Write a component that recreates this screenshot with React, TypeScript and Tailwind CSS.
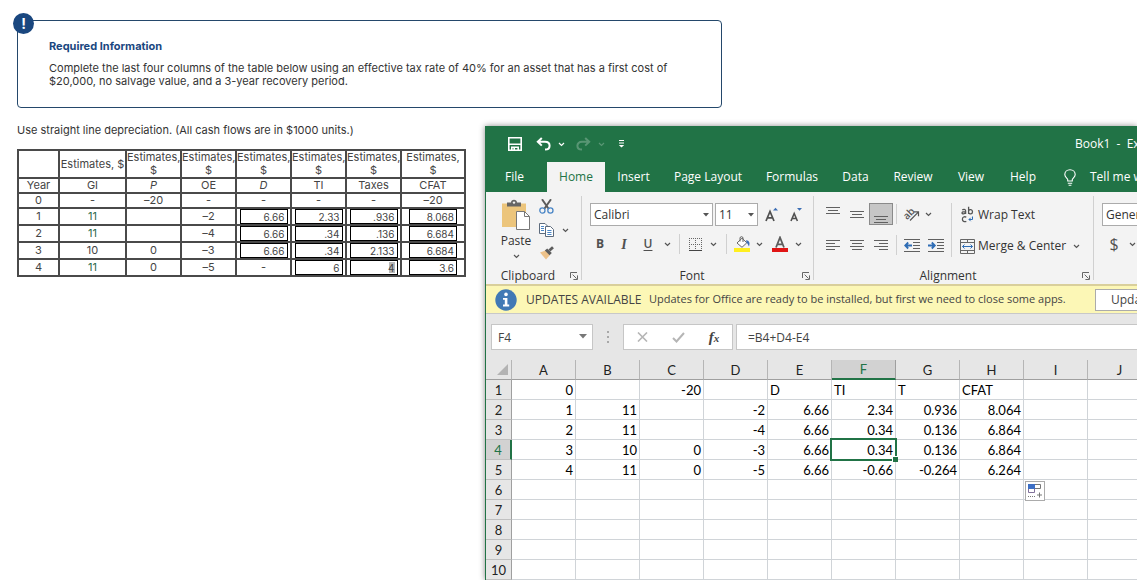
import React from "react";

const columns = ["A", "B", "C", "D", "E", "F", "G", "H", "I", "J"];

const sheet: string[][] = [
  ["0", "", "-20", "", "D", "TI", "T", "CFAT", "", ""],
  ["1", "11", "", "-2", "6.66", "2.34", "0.936", "8.064", "", ""],
  ["2", "11", "", "-4", "6.66", "0.34", "0.136", "6.864", "", ""],
  ["3", "10", "0", "-3", "6.66", "0.34", "0.136", "6.864", "", ""],
  ["4", "11", "0", "-5", "6.66", "-0.66", "-0.264", "6.264", "", ""],
  ["", "", "", "", "", "", "", "", "", ""],
  ["", "", "", "", "", "", "", "", "", ""],
  ["", "", "", "", "", "", "", "", "", ""],
  ["", "", "", "", "", "", "", "", "", ""],
  ["", "", "", "", "", "", "", "", "", ""],
];

type EstimateRow = { given: string[]; answers: string[] };

const estimates: EstimateRow[] = [
  { given: ["1", "11", "", "–2"], answers: ["6.66", "2.33", ".936", "8.068"] },
  { given: ["2", "11", "", "–4"], answers: ["6.66", ".34", ".136", "6.684"] },
  { given: ["3", "10", "0", "–3"], answers: ["6.66", ".34", "2.133", "6.684"] },
  { given: ["4", "11", "0", "–5", "-"], answers: ["6", "4", "3.6"] },
];

function Chevron({ className = "" }: { className?: string }) {
  return (
    <svg className={`shrink-0 ${className}`} width="7" height="5" viewBox="0 0 7 5" fill="none" stroke="currentColor" strokeWidth="1.2">
      <path d="M1 1l2.5 2.4L6 1" />
    </svg>
  );
}

function ChevronButton({ label, className = "text-[#555]" }: { label: string; className?: string }) {
  return (
    <button type="button" aria-label={label} className={`flex h-5 items-center justify-center ${className}`}>
      <Chevron />
    </button>
  );
}

function Divider({ className = "" }: { className?: string }) {
  return <div className={`w-px shrink-0 bg-[#d0d0d0] ${className}`} />;
}

function IconButton({ label, className = "w-6", children }: { label: string; className?: string; children: React.ReactNode }) {
  return (
    <button type="button" aria-label={label} className={`flex h-[22px] shrink-0 items-center justify-center text-[#505050] ${className}`}>
      {children}
    </button>
  );
}

function Lines({ rows, y = 0 }: { rows: [number, number][]; y?: number }) {
  return (
    <svg width="16" height="20" viewBox="0 0 16 20" stroke="#606060" strokeWidth="1">
      {rows.map(([x1, x2], i) => (
        <path key={i} d={`M${x1} ${y + i * 3 + 0.5}H${x2}`} />
      ))}
    </svg>
  );
}

function Launcher() {
  return (
    <svg width="8" height="8" viewBox="0 0 8 8" fill="none" stroke="#666" strokeWidth="1">
      <path d="M.5 6V.5H7M2.6 2.6L6.6 6.6M7.5 3.4V7.5H3.4" />
    </svg>
  );
}

function GroupLabel({ children }: { children: React.ReactNode }) {
  return (
    <div className="mt-auto mb-[2px] flex h-3 items-center pr-[3px] text-[12px] leading-3 text-[#333]">
      <span className="flex-1 text-center">{children}</span>
      <button type="button" aria-label={`${children} settings`}>
        <Launcher />
      </button>
    </div>
  );
}

function DropDown({ label, options, className }: { label: string; options: string[]; className: string }) {
  return (
    <div className={`relative shrink-0 ${className}`}>
      <select aria-label={label} className="block h-[23px] w-full appearance-none border border-[#ababab] bg-white pl-[3px] text-[12px] text-[#333] outline-none">
        {options.map((o) => (
          <option key={o}>{o}</option>
        ))}
      </select>
      <svg className="pointer-events-none absolute top-[10px] right-1" width="6" height="4" viewBox="0 0 6 4">
        <path d="M0 0h6L3 3.4z" fill="#555" />
      </svg>
    </div>
  );
}

function TitleBar() {
  return (
    <div className="flex h-9 items-center bg-[#217346] pl-[22px] text-white">
      <button type="button" aria-label="Save">
        <svg width="14" height="14" viewBox="0 0 14 14" fill="none" stroke="white" strokeWidth="1.6">
          <path d="M.8 .8H13.2V13.2H.8zM1 7.2H13" />
          <path d="M3.8 13.2V10.2H10.2V13.2M6.2 11V13.2" />
        </svg>
      </button>
      <button type="button" aria-label="Undo" className="ml-[14px]">
        <svg width="15" height="14" viewBox="0 0 15 14" fill="none" stroke="white" strokeWidth="2">
          <path d="M5.8 1L1.8 4.8L5.8 8.6M2 4.8H9C12 4.8 13.6 6.5 13.6 8.7C13.6 11.2 11.8 12.6 9 12.6" />
        </svg>
      </button>
      <ChevronButton label="Undo history" className="ml-[2px] w-4 text-white" />
      <button type="button" aria-label="Redo" className="ml-[7px] opacity-25">
        <svg width="15" height="14" viewBox="0 0 15 14" fill="none" stroke="white" strokeWidth="2">
          <path d="M9.2 1L13.2 4.8L9.2 8.6M13 4.8H6C3 4.8 1.4 6.5 1.4 8.7C1.4 11.2 3.2 12.6 6 12.6" />
        </svg>
      </button>
      <ChevronButton label="Redo history" className="ml-[2px] w-4 text-white opacity-25" />
      <button type="button" aria-label="Customize toolbar" className="ml-[9px]">
        <svg width="7" height="8" viewBox="0 0 7 8" fill="white">
          <path d="M1 0h5v1H1zM1 2.5h5v1H1zM.8 5h5.4L3.5 7.6z" />
        </svg>
      </button>
      <div className="ml-auto w-[62px] whitespace-pre text-[12px]">Book1  -  Excel</div>
    </div>
  );
}

function Tabs() {
  return (
    <nav className="flex h-[30px] items-stretch bg-[#217346] text-[12px] whitespace-nowrap text-white">
      <button type="button" className="w-[61px] shrink-0 pr-1">File</button>
      <button type="button" className="w-[58px] shrink-0 bg-[#f3f3f3] text-[#217346]">Home</button>
      <button type="button" className="w-[57px] shrink-0">Insert</button>
      <button type="button" className="w-[92px] shrink-0">Page Layout</button>
      <button type="button" className="w-[76px] shrink-0">Formulas</button>
      <button type="button" className="w-[51px] shrink-0">Data</button>
      <button type="button" className="w-[64px] shrink-0">Review</button>
      <button type="button" className="w-[52px] shrink-0">View</button>
      <button type="button" className="w-[52px] shrink-0">Help</button>
      <button type="button" className="ml-[15px] flex shrink-0 items-center gap-[14px]">
        <svg width="12" height="17" viewBox="0 0 12 17" fill="none" stroke="white" strokeWidth="1.1">
          <path d="M3.7 12V10.6C3.7 9.3 .8 8.4 .8 5.5C.8 2.8 3 .7 6 .7S11.2 2.8 11.2 5.5C11.2 8.4 8.3 9.3 8.3 10.6V12zM3.8 14.2H8.2M4.6 16.2H7.4" />
        </svg>
        Tell me what you want to do
      </button>
    </nav>
  );
}

function ClipboardGroup() {
  return (
    <div className="flex h-[92px] w-[95px] shrink-0 flex-col">
      <div className="flex pt-[7px] pl-4">
        <button type="button" className="flex w-[28px] flex-col items-center text-[12px] leading-4 text-[#333]">
          <svg width="28" height="31" viewBox="0 0 28 31">
            <path d="M0 4.5H24V28H0z" fill="#ecc57c" />
            <path d="M5 7.5V3.5H9C9 1.8 10.3.8 12 .8S15 1.8 15 3.5H19V7.5z" fill="#666" />
            <circle cx="12" cy="3.6" r="1.2" fill="#f3f3f3" />
            <path d="M14.5 12.5H22.5L27.5 17.5V30.5H14.5z" fill="white" stroke="#777" />
            <path d="M22.5 12.5V17.5H27.5" fill="none" stroke="#777" />
          </svg>
          <span className="mt-[3px]">Paste</span>
          <Chevron className="mt-[5px] text-[#555]" />
        </button>
        <div className="ml-[9px] flex flex-col gap-[9px]">
          <button type="button" aria-label="Cut">
            <svg width="15" height="15" viewBox="0 0 15 15" fill="none">
              <path d="M3 .3L9.8 10M12 .3L5.2 10" stroke="#5c5c5c" strokeWidth="2" />
              <circle cx="3.4" cy="11.5" r="2.6" stroke="#4a86c6" strokeWidth="1.3" />
              <circle cx="11.4" cy="11.5" r="2.6" stroke="#4a86c6" strokeWidth="1.3" />
            </svg>
          </button>
          <div className="flex items-center">
            <button type="button" aria-label="Copy">
              <svg width="15" height="14" viewBox="0 0 15 14" fill="white" stroke="#5d6b7c">
                <path d="M.5 .5H6L8.5 3V10.5H.5z" />
                <path d="M6.5 3.5H11.5L14.5 6.5V13.5H6.5z" />
                <path d="M2 3.5H5M2 5.5H5M2 7.5H5M8.3 7.5H12.5M8.3 9.5H12.5M8.3 11.5H12.5" stroke="#4a86c6" />
              </svg>
            </button>
            <ChevronButton label="Copy options" className="-my-1 ml-[7px] w-2 text-[#555]" />
          </div>
          <button type="button" aria-label="Format painter">
            <svg width="16" height="14" viewBox="0 0 16 14">
              <path d="M1 6.5L6.5 4.5L11 9L7 13.5z" fill="#edc28a" />
              <path d="M5.8 4.6L8.2 2.4L12.8 7L10.6 9.3z" fill="#5c5c5c" />
              <path d="M10.4 4.6L14 1.2" stroke="#5c5c5c" strokeWidth="2.8" />
            </svg>
          </button>
        </div>
      </div>
      <GroupLabel>Clipboard</GroupLabel>
    </div>
  );
}

function FontGroup() {
  return (
    <div className="flex h-[92px] w-[231px] shrink-0 flex-col pt-[11px]">
      <div className="flex items-center pl-2">
        <DropDown label="Font" options={["Calibri", "Arial"]} className="w-[123px]" />
        <DropDown label="Font size" options={["11", "12"]} className="ml-[2px] w-[43px]" />
        <IconButton label="Increase font size" className="ml-[2px] w-6">
          <svg width="14" height="16" viewBox="0 0 14 16">
            <path d="M1 14L5 4.5L9 14M2.5 10.8H7.5" fill="none" stroke="#505050" strokeWidth="1.7" />
            <path d="M8 3.5H13L10.5 .8z" fill="#3d6fb5" />
          </svg>
        </IconButton>
        <IconButton label="Decrease font size" className="w-6">
          <svg width="14" height="16" viewBox="0 0 14 16">
            <path d="M2 14L5.2 6.5L8.4 14M3.2 11.5H7.2" fill="none" stroke="#505050" strokeWidth="1.6" />
            <path d="M8 1H13L10.5 3.7z" fill="#3d6fb5" />
          </svg>
        </IconButton>
      </div>
      <div className="mt-[7px] flex items-center pl-[6px]">
        <IconButton label="Bold"><b className="text-[12px]">B</b></IconButton>
        <IconButton label="Italic"><i className="font-['Liberation_Serif',serif] text-[14px] font-bold">I</i></IconButton>
        <IconButton label="Underline"><u className="text-[12px] font-semibold underline-offset-2">U</u></IconButton>
        <ChevronButton label="Underline style" className="w-[14px] text-[#555]" />
        <Divider className="mx-[5px] h-5" />
        <IconButton label="Borders" className="w-[20px]">
          <svg width="13" height="13" viewBox="0 0 13 13" fill="none" stroke="#666">
            <path d="M.5 0V12M6.5 0V12M12.5 0V12M0 .5H13M0 6.5H13" strokeDasharray="1 1" />
            <path d="M0 12.5H13" stroke="#444" />
          </svg>
        </IconButton>
        <ChevronButton label="Border style" className="w-4 text-[#555]" />
        <Divider className="ml-[5px] h-5" />
        <IconButton label="Fill color" className="ml-[3px] w-6">
          <svg width="17" height="16" viewBox="0 0 17 16">
            <path d="M3 7L8 2.2L12.8 6.8L8 11.3z" fill="white" stroke="#666" />
            <path d="M6 5.5V2C6 .2 9 .2 9 2V6" fill="none" stroke="#666" />
            <path d="M12 4.2C15.5 4.4 16.2 7 15 10.5C13.8 9 14 7.5 12.6 6.8z" fill="#3d6fb5" />
            <path d="M0 12H16V16H0z" fill="#ffef1f" />
          </svg>
        </IconButton>
        <ChevronButton label="Fill colors" className="w-[10px] text-[#555]" />
        <IconButton label="Font color" className="ml-1 w-6">
          <svg width="16" height="16" viewBox="0 0 16 16">
            <path d="M4 11.5L8 1.5L12 11.5M5.3 8.3H10.7" fill="none" stroke="#5c5c5c" strokeWidth="1.8" />
            <path d="M0 12H16V16H0z" fill="#e01414" />
          </svg>
        </IconButton>
        <ChevronButton label="Font colors" className="w-3 text-[#555]" />
      </div>
      <GroupLabel>Font</GroupLabel>
    </div>
  );
}

function AlignmentGroup() {
  return (
    <div className="flex h-[92px] w-[279px] shrink-0 flex-col pt-[11px]">
      <div className="flex pl-[7px]">
        <div className="w-[130px] shrink-0">
          <div className="flex items-center">
            <IconButton label="Top align"><Lines rows={[[1, 15], [3, 13], [1, 15]]} y={3} /></IconButton>
            <IconButton label="Middle align"><Lines rows={[[1, 15], [3, 13], [1, 15]]} y={7} /></IconButton>
            <IconButton label="Bottom align" className="w-6 border border-[#8a8a8a] bg-[#c6c6c6]"><Lines rows={[[1, 15], [3, 13], [1, 15]]} y={12} /></IconButton>
            <Divider className="mx-[3px] h-5" />
            <IconButton label="Orientation">
              <svg width="18" height="18" viewBox="0 0 18 18" className="overflow-visible">
                <text x="0" y="12" fontSize="10" fontWeight="600" fill="#555" transform="rotate(-45 6 9)">ab</text>
                <path d="M7 15.5L15.3 7.2M11 6.8H15.5V11.2" fill="none" stroke="#555" strokeWidth="1.2" />
              </svg>
            </IconButton>
            <ChevronButton label="Orientation options" className="w-2 text-[#555]" />
          </div>
          <div className="mt-[9px] flex items-center">
            <IconButton label="Align left"><Lines rows={[[1, 15], [1, 10], [1, 15], [1, 10]]} y={5} /></IconButton>
            <IconButton label="Center"><Lines rows={[[1, 15], [3, 13], [1, 15], [3, 13]]} y={5} /></IconButton>
            <IconButton label="Align right"><Lines rows={[[1, 15], [6, 15], [1, 15], [6, 15]]} y={5} /></IconButton>
            <Divider className="mx-[3px] h-5" />
            <IconButton label="Decrease indent">
              <svg width="16" height="13" viewBox="0 0 16 13" fill="none">
                <path d="M0 .5H16M9 3.5H16M9 6.5H16M9 9.5H16M0 12.5H16" stroke="#606060" />
                <path d="M8 6.5H1.5M4.2 3.5L1.2 6.5L4.2 9.5" stroke="#2f6db5" strokeWidth="1.8" />
              </svg>
            </IconButton>
            <IconButton label="Increase indent">
              <svg width="16" height="13" viewBox="0 0 16 13" fill="none">
                <path d="M0 .5H16M9 3.5H16M9 6.5H16M9 9.5H16M0 12.5H16" stroke="#606060" />
                <path d="M0 6.5H6.5M3.8 3.5L6.8 6.5L3.8 9.5" stroke="#2f6db5" strokeWidth="1.8" />
              </svg>
            </IconButton>
          </div>
        </div>
        <Divider className="h-[54px]" />
        <div className="pl-2 text-[12px] text-[#333]">
          <button type="button" className="flex h-[23px] items-center gap-[3px] whitespace-nowrap">
            <svg width="15" height="17" viewBox="0 0 15 17" fill="none" stroke="#555" strokeWidth="1.3">
              <path d="M2.3 4C3.3 3 5.6 3 5.6 4.8V8M5.6 5.6C3 5.6 2 6 2 6.9C2 8.3 4.6 8.2 5.6 6.7M8.6 .8V8M8.6 4.7C9.6 3 12.5 3.2 12.5 5.8S9.6 8.4 8.6 6.9" />
              <path d="M6.3 11.2C4.5 10.2 2.4 11.1 2.4 13.2S4.5 16.2 6.3 15.3" />
              <path d="M12.5 10.5V13.5H9M10.7 11.8L9 13.5L10.7 15.2" stroke="#2f6db5" strokeWidth="1" />
            </svg>
            Wrap Text
          </button>
          <div className="mt-[9px] flex items-center">
            <button type="button" className="flex h-[22px] items-center gap-[3px] whitespace-nowrap">
              <svg width="15" height="15" viewBox="0 0 15 15" fill="none" stroke="#666">
                <path d="M.5 .5H14.5V14.5H.5zM.5 3.5H14.5M.5 11.5H14.5M7.5 .5V3.5M7.5 11.5V14.5" />
                <path d="M2.5 7.5H12.5M4.5 5.5L2.5 7.5L4.5 9.5M10.5 5.5L12.5 7.5L10.5 9.5" stroke="#2f6db5" />
              </svg>
              Merge &amp; Center
            </button>
            <ChevronButton label="Merge options" className="ml-1 w-3 text-[#555]" />
          </div>
        </div>
      </div>
      <GroupLabel>Alignment</GroupLabel>
    </div>
  );
}

function NumberGroup() {
  return (
    <div className="flex h-[92px] w-[140px] shrink-0 flex-col pt-[11px] pl-2">
      <DropDown label="Number format" options={["General", "Currency"]} className="w-[120px]" />
      <div className="mt-[7px] flex items-center">
        <IconButton label="Accounting format"><span className="text-[16px]">$</span></IconButton>
        <ChevronButton label="Currencies" className="w-3 text-[#555]" />
      </div>
    </div>
  );
}

function UpdateBar() {
  return (
    <div className="flex h-[30px] items-center border-t-2 border-b border-t-[#d9cf9b] border-b-[#c8c8c8] bg-[#fcf7b6] pl-[9px] text-[12px] whitespace-nowrap text-[#444]">
      <svg className="shrink-0" width="22" height="22" viewBox="0 0 22 22">
        <circle cx="11" cy="11" r="10.7" fill="#4179b5" />
        <circle cx="11" cy="5.4" r="1.8" fill="white" />
        <path d="M8 9H12.4V15.6H14.2V17.4H8V15.6H9.8V10.8H8z" fill="white" />
      </svg>
      <span className="ml-[9px] w-[123px] shrink-0">UPDATES AVAILABLE</span>
      <span className="w-[446px] shrink-0 text-[11px]">Updates for Office are ready to be installed, but first we need to close some apps.</span>
      <button type="button" className="h-[22px] w-[100px] shrink-0 border border-[#ababab] bg-white pl-[15px] text-left">Update now</button>
    </div>
  );
}

function FormulaBar() {
  return (
    <div className="flex h-[46px] items-start bg-[#e6e6e6] pt-[10px] pl-[5px] text-[12px] text-[#444]">
      <div className="relative w-[102px] shrink-0">
        <input aria-label="Name box" defaultValue="F4" className="block h-[26px] w-full border border-[#c6c6c6] bg-white pl-[6px] outline-none" />
        <svg className="absolute top-[10px] right-[6px]" width="8" height="5" viewBox="0 0 8 5">
          <path d="M0 0h8L4 4.5z" fill="#777" />
        </svg>
      </div>
      <div className="flex h-[26px] w-[30px] shrink-0 flex-col items-center justify-center gap-[3px]">
        <span className="size-[2px] bg-[#a8a8a8]" />
        <span className="size-[2px] bg-[#a8a8a8]" />
        <span className="size-[2px] bg-[#a8a8a8]" />
      </div>
      <div className="flex h-[26px] w-[110px] shrink-0 items-center border border-[#c6c6c6] bg-white">
        <button type="button" aria-label="Cancel" className="flex w-9 justify-center">
          <svg width="11" height="10" viewBox="0 0 11 10" stroke="#b5b5b5" strokeWidth="1.6">
            <path d="M1 .5L10 9.5M10 .5L1 9.5" />
          </svg>
        </button>
        <button type="button" aria-label="Enter" className="flex w-9 justify-center">
          <svg width="13" height="11" viewBox="0 0 13 11" fill="none" stroke="#b5b5b5" strokeWidth="2">
            <path d="M1 6L4.5 9.5L12 1" />
          </svg>
        </button>
        <button type="button" aria-label="Insert function" className="w-9 text-center font-['Liberation_Serif',serif] text-[15px] leading-5 font-bold italic">
          f<span className="text-[11px]">x</span>
        </button>
      </div>
      <input aria-label="Formula" defaultValue="=B4+D4-E4" className="ml-[3px] h-[26px] min-w-0 flex-1 border border-r-0 border-[#c6c6c6] bg-white pl-[11px] outline-none" />
    </div>
  );
}

function SheetCell({ value, row, col }: { value: string; row: number; col: number }) {
  const selected = row === 3 && col === 5;
  const fillOptions = row === 5 && col === 8;
  const isText = /^[A-Z]/.test(value);
  return (
    <td className={`relative border-r border-b border-[#d0d4d8] pt-[2px] ${isText ? "pl-[2px] text-left" : "pr-[2px] text-right"}`}>
      {value}
      {selected && (
        <div className="absolute -inset-[2px] z-10 border-2 border-[#217346]">
          <div className="absolute -right-[3px] -bottom-[3px] size-[6px] border-t border-l border-white bg-[#217346]" />
        </div>
      )}
      {fillOptions && (
        <button type="button" aria-label="Auto fill options" className="absolute top-px left-px z-10 flex size-5 items-center justify-center border border-[#ababab] bg-white">
          <svg width="14" height="14" viewBox="0 0 14 14" fill="none" stroke="#777">
            <path d="M6.5 .5H12.5V4.5H6.5z" />
            <path d="M.5 4.5H6.5V8.5H.5z" stroke="#80709a" />
            <path d="M0 0H7V5H0z" fill="#3d6fc5" stroke="none" />
            <path d="M0 12.5H8" strokeDasharray="1 1" />
            <path d="M11.5 8.5V13.5M9 11H14" />
          </svg>
        </button>
      )}
    </td>
  );
}

function Sheet() {
  return (
    <table className="w-[666px] table-fixed border-separate border-spacing-0 bg-white font-['Lato',sans-serif] text-[13px] leading-[17px] text-black">
      <colgroup>
        <col className="w-[26px]" />
        {columns.map((c) => (
          <col key={c} className="w-16" />
        ))}
      </colgroup>
      <thead>
        <tr className="h-5 bg-[#e6e6e6] text-[#222]">
          <th className="border-r border-b border-r-[#b5b5b5] border-b-[#9f9f9f] p-0">
            <svg className="ml-auto mr-[3px]" width="11" height="11" viewBox="0 0 11 11">
              <path d="M11 0V11H0z" fill="#b3b3b3" />
            </svg>
          </th>
          {columns.map((c) => (
            <th
              key={c}
              scope="col"
              className={
                c === "F"
                  ? "border-r border-b-2 border-r-[#9f9f9f] border-b-[#217346] bg-[#d2d2d2] pt-px font-normal text-[#217346]"
                  : "border-r border-b border-r-[#b5b5b5] border-b-[#9f9f9f] pt-px font-normal"
              }
            >
              {c}
            </th>
          ))}
        </tr>
      </thead>
      <tbody>
        {sheet.map((cells, r) => (
          <tr key={r} className="h-5">
            <th
              scope="row"
              className={
                r === 3
                  ? "border-r-2 border-b border-r-[#217346] border-b-[#c0c0c0] bg-[#d2d2d2] pt-[2px] font-normal text-[#217346]"
                  : "border-r border-b border-r-[#9f9f9f] border-b-[#c0c0c0] bg-[#e6e6e6] pt-[2px] font-normal text-[#222]"
              }
            >
              {r + 1}
            </th>
            {cells.map((v, c) => (
              <SheetCell key={c} value={v} row={r} col={c} />
            ))}
          </tr>
        ))}
      </tbody>
    </table>
  );
}

const cell = "border-2 border-[#4a4a4a] p-0 text-center font-normal";

function EstimateTable() {
  return (
    <table className="mt-[14px] w-[449px] table-fixed border-collapse text-[11px] leading-[13px] text-[#444]">
      <colgroup>
        <col className="w-[41px]" />
        <col className="w-[67px]" />
        <col className="w-[55px]" />
        <col className="w-[55px]" />
        <col className="w-[55px]" />
        <col className="w-[55px]" />
        <col className="w-[55px]" />
        <col />
      </colgroup>
      <thead>
        <tr className="h-7">
          <th className={cell} />
          <th className={`${cell} whitespace-nowrap`}>Estimates, $</th>
          {["P", "OE", "D", "TI", "Taxes", "CFAT"].map((k) => (
            <th key={k} className={cell}>Estimates, $</th>
          ))}
        </tr>
        <tr className="h-[15px]">
          <th className={cell}>Year</th>
          <th className={cell}>GI</th>
          <th className={`${cell} italic`}>P</th>
          <th className={cell}>OE</th>
          <th className={`${cell} italic`}>D</th>
          <th className={cell}>TI</th>
          <th className={cell}>Taxes</th>
          <th className={cell}>CFAT</th>
        </tr>
      </thead>
      <tbody>
        <tr className="h-[15px]">
          {["0", "-", "–20", "-", "-", "-", "-", "–20"].map((v, i) => (
            <td key={i} className={cell}>{v}</td>
          ))}
        </tr>
        {estimates.map(({ given, answers }, r) => (
          <tr key={r} className="h-[17px]">
            {given.map((v, i) => (
              <td key={i} className={v === "11" ? `${cell} text-[#2c6b4c]` : cell}>{v}</td>
            ))}
            {answers.map((v, i) => (
              <td key={i} className={cell}>
                <input
                  aria-label={`Year ${given[0]} answer ${i + 1}`}
                  defaultValue={v}
                  className={
                    v === "4"
                      ? "mx-auto block h-[15px] w-12 border border-black bg-[linear-gradient(#b8b8b8,#b8b8b8)] bg-[length:6px_11px] bg-[position:right_2px_center] bg-no-repeat px-[2px] text-right text-[10px] leading-3 outline-none"
                      : "mx-auto block h-[15px] w-12 border border-black bg-white px-[2px] text-right text-[10px] leading-3 outline-none"
                  }
                />
              </td>
            ))}
          </tr>
        ))}
      </tbody>
    </table>
  );
}

export default function App() {
  return (
    <div className="overflow-hidden bg-white font-['Open_Sans',sans-serif]">
      <div className="px-[17px] pt-5 font-['Inter',sans-serif]">
        <section className="relative h-[88px] max-w-[705px] rounded-[4px] border border-[#24486b] pt-[19px] pl-[31px] text-[11px] leading-[13px] text-[#333]">
          <div className="absolute -top-[8px] -left-[5px] flex size-[21px] items-center justify-center rounded-full bg-[#1a477f] text-[14px] font-bold text-white">!</div>
          <h2 className="font-bold text-[#1a477f]">Required Information</h2>
          <p className="mt-[9px] max-w-[630px]">
            Complete the last four columns of the table below using an effective tax rate of 40% for an asset that has a first cost of $20,000, no salvage value, and a 3-year recovery period.
          </p>
        </section>
      </div>
      <div className="mt-[18px] flex">
        <div className="w-[485px] shrink-0 pl-[17px] font-['Inter',sans-serif]">
          <p className="text-[11px] leading-[9px] text-[#333]">Use straight line depreciation. (All cash flows are in $1000 units.)</p>
          <EstimateTable />
        </div>
        <main className="min-w-0 flex-1 overflow-hidden border-l border-[#217346] bg-[#f3f3f3] shadow-[0_0_6px_rgba(0,0,0,0.45)]">
          <TitleBar />
          <Tabs />
          <div className="flex">
            <ClipboardGroup />
            <Divider className="mt-1 h-[84px]" />
            <FontGroup />
            <Divider className="mt-1 h-[84px]" />
            <AlignmentGroup />
            <Divider className="mt-1 h-[84px]" />
            <NumberGroup />
          </div>
          <UpdateBar />
          <FormulaBar />
          <Sheet />
        </main>
      </div>
    </div>
  );
}
